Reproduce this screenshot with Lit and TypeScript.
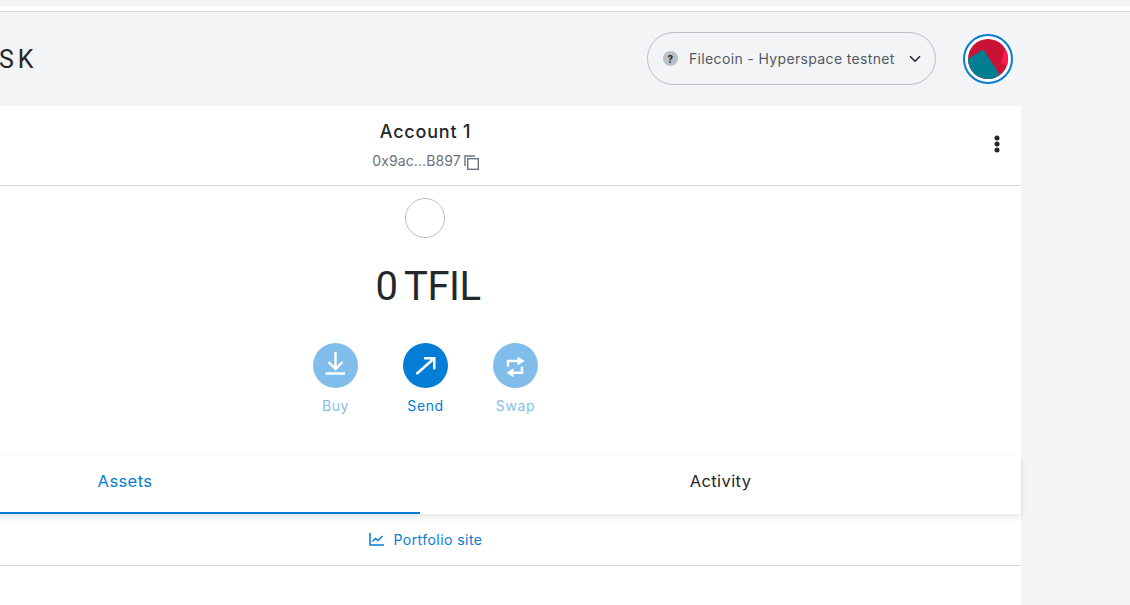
import { LitElement, css, html } from 'lit';
import { customElement } from 'lit/decorators.js';

@customElement('app-root')
export class AppRoot extends LitElement {
  static styles = css`
    :host {
      display: block;
      height: 605px;
      overflow: hidden;
      background: #f2f4f6;
      font-family: Inter, 'Noto Sans', sans-serif;
      color: #24272a;
    }
    .strip {
      height: 5px;
      margin-top: 6px;
      background: #fff;
      border-bottom: 1px solid #d6d9dc;
    }
    .top {
      height: 94px;
      display: flex;
      align-items: center;
      padding-right: 117px;
    }
    .logo {
      font-family: Roboto, sans-serif;
      font-size: 25px;
      letter-spacing: 4px;
      color: #24272a;
      margin-left: -1px;
      margin-right: auto;
    }
    .network {
      width: 289px;
      height: 53px;
      box-sizing: border-box;
      border: 1px solid #bbc0c5;
      border-radius: 27px;
      display: flex;
      align-items: center;
      padding: 0 14px 0 15px;
      margin-top: -1px;
      font-size: 14px;
      letter-spacing: 0.35px;
      color: #535a61;
    }
    .q {
      width: 15px;
      height: 15px;
      border-radius: 50%;
      background: #bbc0c5;
      color: #24272a;
      font-size: 10px;
      font-weight: 700;
      display: flex;
      align-items: center;
      justify-content: center;
      margin-right: 11px;
      flex: none;
    }
    .network span.name { flex: 1; white-space: nowrap; }
    .avatar {
      width: 50px;
      height: 50px;
      margin-left: 27px;
      flex: none;
    }
    .card {
      width: 1191px;
      margin-left: -170px;
      height: 520px;
      background: #fff;
    }
    .account {
      height: 80px;
      box-sizing: border-box;
      border-bottom: 1px solid #d6d9dc;
      display: flex;
      flex-direction: column;
      align-items: center;
      position: relative;
      padding-top: 15px;
    }
    .acct-name { font-size: 18px; font-weight: 500; line-height: 22px; letter-spacing: 0.8px; }
    .addr {
      font-size: 14px;
      line-height: 20px;
      letter-spacing: 0.1px;
      color: #6a737d;
      margin-top: 8px;
      display: flex;
      align-items: center;
      gap: 3px;
    }
    .addr svg { margin-top: 3px; }
    .kebab {
      position: absolute;
      right: 21px;
      top: 29px;
    }
    .balance {
      display: flex;
      flex-direction: column;
      align-items: center;
      padding-top: 12px;
    }
    .token {
      width: 40px;
      height: 40px;
      box-sizing: border-box;
      border: 1px solid #bbc0c5;
      border-radius: 50%;
      margin-right: 1px;
    }
    .amount {
      font-family: Roboto, sans-serif;
      font-size: 40px;
      line-height: 48px;
      margin-top: 25px;
      margin-left: 5px;
      letter-spacing: -0.5px;
      word-spacing: -2px;
    }
    .actions {
      display: flex;
      gap: 45px;
      margin-top: 32px;
    }
    .act {
      width: 45px;
      display: flex;
      flex-direction: column;
      align-items: center;
      color: #037dd6;
      font-size: 14px;
      letter-spacing: 0.6px;
    }
    .act.off { opacity: 0.5; }
    .act .circle {
      width: 45px;
      height: 45px;
      border-radius: 50%;
      background: #037dd6;
      margin-bottom: 8px;
    }
    .act svg { display: block; }
    .act label { line-height: 20px; }
    .tabs {
      display: flex;
      height: 58px;
      margin-top: 40px;
      box-shadow: 0 3px 6px rgba(0, 0, 0, 0.1);
      font-size: 16.5px;
      letter-spacing: 0.4px;
    }
    .tab {
      flex: 1;
      display: flex;
      align-items: center;
      justify-content: center;
      box-sizing: border-box;
      padding-bottom: 6px;
      border-bottom: 2px solid transparent;
    }
    .tab.active { color: #037dd6; border-bottom-color: #037dd6; flex: 0 0 590px; }
    .portfolio {
      height: 52px;
      box-sizing: border-box;
      border-bottom: 1px solid #d6d9dc;
      display: flex;
      align-items: center;
      justify-content: center;
      gap: 10px;
      font-size: 14px;
      letter-spacing: 0.45px;
      color: #037dd6;
    }
  `;

  protected render() {
    return html`
      <div class="strip"></div>
      <div class="top">
        <div class="logo">SK</div>
        <div class="network">
          <div class="q">?</div>
          <span class="name">Filecoin - Hyperspace testnet</span>
          <svg width="12" height="8" viewBox="0 0 12 8"><path d="M1 1.200l5 5 5-5" fill="none" stroke="#24272a" stroke-width="1.600"/></svg>
        </div>
        <svg class="avatar" viewBox="0 0 50 50">
          <defs><clipPath id="c"><circle cx="25" cy="25" r="20"/></clipPath></defs>
          <circle cx="25" cy="25" r="24" fill="#fff" stroke="#037dd6" stroke-width="2"/>
          <g clip-path="url(#c)">
            <rect width="50" height="50" fill="#c81236"/>
            <path d="M41 16L38 29.500 46 32V16z" fill="#fb1a4a"/>
            <path d="M5 25l15.300-9.700 16 25-12 12-24-8z" fill="#017e92"/>
          </g>
        </svg>
      </div>
      <div class="card">
        <div class="account">
          <div class="acct-name">Account 1</div>
          <div class="addr">0x9ac...B897
            <svg width="15" height="15" viewBox="0 0 15 15"><path d="M1 11V1h10" fill="none" stroke="#6a737d" stroke-width="1.400"/><rect x="3.700" y="3.700" width="10.600" height="10.600" fill="none" stroke="#6a737d" stroke-width="1.400"/></svg>
          </div>
          <svg class="kebab" width="6" height="18" viewBox="0 0 6 18"><circle cx="3" cy="3" r="2.500" fill="#24272a"/><circle cx="3" cy="9" r="2.500" fill="#24272a"/><circle cx="3" cy="15" r="2.500" fill="#24272a"/></svg>
        </div>
        <div class="balance">
          <div class="token"></div>
          <div class="amount">0 TFIL</div>
          <div class="actions">
            <div class="act off">
              <div class="circle"><svg width="45" height="45" viewBox="0 0 45 45"><path d="M22.500 9v17M15.500 19l7 7 7-7" fill="none" stroke="#fff" stroke-width="2.400"/><path d="M12.500 30.500H32" stroke="#fff" stroke-width="2.500"/></svg></div>
              <label>Buy</label>
            </div>
            <div class="act">
              <div class="circle"><svg width="45" height="45" viewBox="0 0 45 45"><path d="M14.300 30.300L31 15.500M22 15.300h9.300v10" fill="none" stroke="#fff" stroke-width="2.500" stroke-linecap="round"/></svg></div>
              <label>Send</label>
            </div>
            <div class="act off">
              <div class="circle"><svg width="45" height="45" viewBox="0 0 45 45"><path d="M15 23.700V18h12M29 23.700v6H17" fill="none" stroke="#fff" stroke-width="2.400"/><path d="M24.500 13.500L31.500 18l-7 4.500zM20.500 25.200L13.500 29.700l7 4.500z" fill="#fff"/></svg></div>
              <label>Swap</label>
            </div>
          </div>
        </div>
        <div class="tabs">
          <div class="tab active">Assets</div>
          <div class="tab">Activity</div>
        </div>
        <div class="portfolio">
          <svg width="15" height="13" viewBox="0 0 15 13"><path d="M1 0v12h14" fill="none" stroke="#037dd6" stroke-width="1.500"/><path d="M3.500 8.500l3-3 2.500 2 4.500-4.500" fill="none" stroke="#037dd6" stroke-width="1.500"/></svg>
          <span>Portfolio site</span>
        </div>
      </div>
    `;
  }
}
